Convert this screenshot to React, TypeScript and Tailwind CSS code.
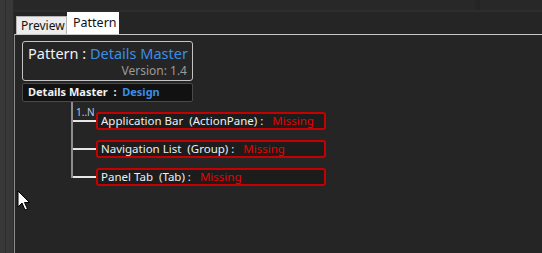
import React from 'react';

const font = { fontFamily: '"Noto Sans", "Open Sans", sans-serif' };

const Part = ({ name, kind }: { name: string; kind: string }) => (
  <div className="flex items-center">
    <div className="w-[23px] h-[2px] bg-[#e6e6e6]" />
    <div className="w-[230px] h-[18px] flex items-center pl-[3px] border-2 border-[#c40000] rounded-[3px] bg-[#1c1c1c] text-[11.5px] leading-none whitespace-pre">
      <span className="text-[#f0f0f0]">{name}  ({kind}) :</span>
      <span className="text-[#e80000]">   Missing</span>
    </div>
  </div>
);

const Cursor = () => (
  <svg width="14" height="22" viewBox="0 0 14 22" className="absolute left-[17px] top-[190px]">
    <path d="M1 1 L1 17 L5 13 L8 20 L10.5 19 L7.5 12.5 L12.5 12.5 Z" fill="#fff" stroke="#000" strokeWidth="1" strokeLinejoin="miter" />
  </svg>
);

export default function App() {
  return (
    <div className="relative w-[542px] h-[253px] overflow-hidden bg-[#252525] flex" style={font}>
      <div className="w-[14px] h-full flex bg-[#383838]">
        <div className="w-[5px] h-full" />
        <div className="w-[1px] h-full bg-[#2e2e2e]" />
        <div className="w-[7px] h-full" />
        <div className="w-[1px] h-full bg-[#2b2b2b]" />
      </div>
      <div className="flex-1 flex flex-col">
        <div className="h-[10px] bg-[#282828] flex">
          <div className="w-[461px]" />
          <div className="w-[5px] bg-[#252525]" />
        </div>
        <div className="h-[2px] bg-[#2d2d2d]" />
        <div className="h-[22px] flex items-end">
          <div className="w-[2px]" />
          <div className="w-[51px] h-[18px] bg-[#ececec] border border-[#b4b4b4] border-b-0 text-[12px] text-[#111] flex items-center pl-[4px]">
            Preview
          </div>
          <div className="w-[52px] h-[22px] bg-white text-[12.5px] text-[#111] flex items-center pl-[6px]">
            Pattern
          </div>
        </div>
        <div className="flex-1 border-t border-l border-[#c8c8c8] border-l-[#8c8c8c] bg-[#252525] pl-[7px] pt-[6px]">
          <div className="w-[171px] h-[40px] border border-[#c4c4c4] rounded-[3px] px-[5px] pt-[1px] flex flex-col">
            <div className="text-[14.5px] leading-[20px] text-[#f2f2f2] whitespace-pre">
              Pattern : <span className="text-[#3a8ee6]">Details Master</span>
            </div>
            <div className="text-[12px] leading-[15px] text-[#9a9a9a] text-right whitespace-pre">Version: 1.4</div>
          </div>
          <div className="w-[171px] h-[19px] mt-[2px] bg-[#111] border border-[#4a4a4a] rounded-[2px] flex items-center pl-[5px] text-[11px] font-bold whitespace-pre">
            <span className="text-[#f2f2f2]">Details Master  :  </span>
            <span className="text-[#3a8ee6]">Design</span>
          </div>
          <div className="flex pl-[49px]">
            <div className="w-[2px] h-[76px] bg-[#8e8e8e]" />
            <div className="flex flex-col">
              <div className="h-[10px] mt-[5px] pl-[3px] text-[10px] leading-[10px] text-[#b8cbe0]">1..N</div>
              <div className="flex flex-col gap-[10px] -mt-[5px]">
                <Part name="Application Bar" kind="ActionPane" />
                <Part name="Navigation List" kind="Group" />
                <Part name="Panel Tab" kind="Tab" />
              </div>
            </div>
          </div>
        </div>
      </div>
      <Cursor />
    </div>
  );
}
